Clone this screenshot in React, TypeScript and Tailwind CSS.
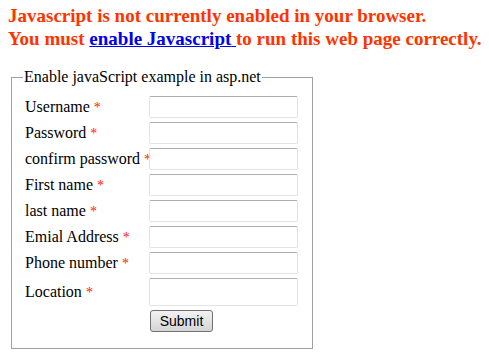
import React from "react";

const fields = [
  { label: "Username", tall: false },
  { label: "Password", tall: false },
  { label: "confirm password", tall: false },
  { label: "First name", tall: false },
  { label: "last name", tall: false },
  { label: "Emial Address", tall: false },
  { label: "Phone number", tall: false },
  { label: "Location", tall: true },
];

export default function App() {
  return (
    <div className="min-h-[358px] bg-white px-2 pt-[4px] font-['Liberation_Serif',serif] text-black">
      <div className="whitespace-nowrap text-[19px] font-bold leading-[23px] text-[#ff3300]">
        <div>Javascript is not currently enabled in your browser.</div>
        <div>
          You must{" "}
          <a href="#" className="text-[#0000ee] underline">
            enable Javascript{" "}
          </a>
          to run this web page correctly.
        </div>
      </div>

      <fieldset className="ml-[3px] mt-[18px] w-[302px] border border-[#a0a0a0] px-[13px] pb-[16px] pt-[10px]">
        <legend className="-ml-[2px] px-[1px] text-[16px] leading-[18px]">
          Enable javaScript example in asp.net
        </legend>
        <div className="flex flex-col gap-[4px]">
          {fields.map((f) => (
            <div key={f.label} className="flex items-center">
              <div className="w-[124px] shrink-0 whitespace-nowrap text-[16px] leading-[18px]">
                {f.label} <span className="text-[14px] text-[#ff2200]">*</span>
              </div>
              <input
                type="text"
                className={`w-[149px] rounded-[2px] border border-[#e3e3e3] border-t-[#abadb3] bg-white ${
                  f.tall ? "h-[28px]" : "h-[22px]"
                }`}
              />
            </div>
          ))}
          <div className="flex pl-[125px]">
            <button
              type="button"
              className="h-[22px] w-[63px] rounded-[3px] border border-[#707070] bg-gradient-to-b from-[#f2f2f2] to-[#d5d5d5] font-['Liberation_Sans',sans-serif] text-[14px] leading-[18px] text-black"
            >
              Submit
            </button>
          </div>
        </div>
      </fieldset>
    </div>
  );
}
